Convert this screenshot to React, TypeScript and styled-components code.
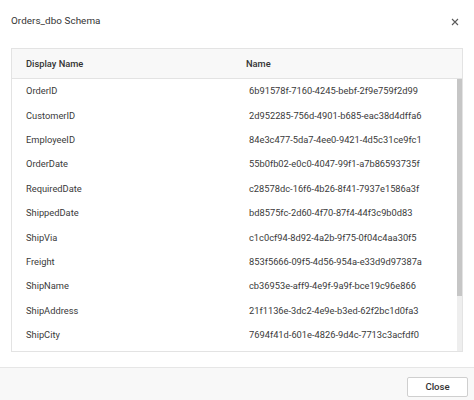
import * as React from "react";
import styled, { createGlobalStyle } from "styled-components";

type Field = { displayName: string; name: string };

// only the rows that fit the grid's viewport; the scrollbar thumb hints at the rest
const fields: Field[] = [
  { displayName: "OrderID", name: "6b91578f-7160-4245-bebf-2f9e759f2d99" },
  { displayName: "CustomerID", name: "2d952285-756d-4901-b685-eac38d4dffa6" },
  { displayName: "EmployeeID", name: "84e3c477-5da7-4ee0-9421-4d5c31ce9fc1" },
  { displayName: "OrderDate", name: "55b0fb02-e0c0-4047-99f1-a7b86593735f" },
  { displayName: "RequiredDate", name: "c28578dc-16f6-4b26-8f41-7937e1586a3f" },
  { displayName: "ShippedDate", name: "bd8575fc-2d60-4f70-87f4-44f3c9b0d83" },
  { displayName: "ShipVia", name: "c1c0cf94-8d92-4a2b-9f75-0f04c4aa30f5" },
  { displayName: "Freight", name: "853f5666-09f5-4d56-954a-e33d9d97387a" },
  { displayName: "ShipName", name: "cb36953e-aff9-4e9f-9a9f-bce19c96e866" },
  { displayName: "ShipAddress", name: "21f1136e-3dc2-4e9e-b3ed-62f2bc1d0fa3" },
  { displayName: "ShipCity", name: "7694f41d-601e-4826-9d4c-7713c3acfdf0" },
];

/* =========================
 * Styles
 * ========================= */

const GlobalStyle = createGlobalStyle`
  html, body {
    margin: 0;
    padding: 0;
    background: #ffffff;
  }
  body {
    font-family: Roboto, "Liberation Sans", Arial, sans-serif;
  }
`;

const Dialog = styled.div`
  width: 474px;
  height: 400px;
  display: flex;
  flex-direction: column;
  box-sizing: border-box;
  background: #ffffff;
  overflow: hidden;
`;

const DialogHeader = styled.div`
  flex: 0 0 40px;
  height: 40px;
  display: flex;
  align-items: center;
  justify-content: space-between;
  padding: 0 12px 0 11px;
  box-sizing: border-box;
`;

const DialogTitle = styled.div`
  font-size: 9.9px;
  color: #333333;
  letter-spacing: 0.05px;
  margin-top: 1px;
`;

const CloseIcon = styled.button`
  width: 14px;
  height: 14px;
  padding: 0;
  border: none;
  background: transparent;
  display: flex;
  align-items: center;
  justify-content: center;
  cursor: pointer;
  margin-top: 4px;
`;

const DialogContent = styled.div`
  padding: 7.5px 11px 0 11px;
  flex: 0 0 auto;
`;

const Grid = styled.div`
  border: 1px solid #e3e3e3;
  box-sizing: border-box;
  width: 452px;
`;

const HeadRow = styled.div`
  display: grid;
  grid-template-columns: 222px 1fr;
  height: 30px;
  align-items: center;
  background: #f8f8f8;
  border-bottom: 1px solid #e3e3e3;
  box-sizing: border-box;
`;

const HeadCell = styled.div<{ $pad: number }>`
  padding-left: ${({ $pad }) => $pad}px;
  font-size: 9.3px;
  font-weight: 500;
  color: #333333;
`;

const Body = styled.div`
  height: 272px;
  display: flex;
`;

const RowList = styled.div`
  flex: 1;
  overflow: hidden;
`;

const ScrollTrack = styled.div`
  width: 5px;
  flex: 0 0 5px;
  background: #eeeeee;
`;

const ScrollThumb = styled.div<{ $size: number }>`
  height: ${({ $size }) => $size}px;
  background: #c6c6c6;
`;

const Row = styled.div`
  display: grid;
  grid-template-columns: 222px 1fr;
  height: 24.4px;
  align-items: center;
`;

const Cell = styled.div<{ $pad: number }>`
  padding-left: ${({ $pad }) => $pad}px;
  font-size: 9.3px;
  color: #3a3a3a;
  white-space: nowrap;
`;

const Footer = styled.div`
  margin-top: 15px;
  height: 40px;
  flex: 0 0 40px;
  display: flex;
  align-items: center;
  justify-content: flex-end;
  padding: 0 6px 0 0;
  background: #f8f8f8;
  border-top: 1px solid #e6e6e6;
  box-sizing: border-box;
`;

const FooterButton = styled.button`
  width: 61px;
  height: 20px;
  margin-top: -1px;
  border: 1px solid #cfcfcf;
  border-radius: 2px;
  background: #ffffff;
  color: #333333;
  font-family: Roboto, "Liberation Sans", Arial, sans-serif;
  font-size: 9.6px;
  font-weight: 500;
  padding: 0;
  cursor: pointer;
`;

/* =========================
 * Component
 * ========================= */

export default function App() {
  return (
    <>
      <GlobalStyle />
      <Dialog>
        <DialogHeader>
          <DialogTitle>Orders_dbo Schema</DialogTitle>
          <CloseIcon aria-label="close">
            <svg width="8" height="8" viewBox="0 0 8 8">
              <path
                d="M1 1 L7 7 M7 1 L1 7"
                stroke="#5a5a5a"
                strokeWidth="1.1"
                fill="none"
              />
            </svg>
          </CloseIcon>
        </DialogHeader>

        <DialogContent>
          <Grid>
            <HeadRow>
              <HeadCell $pad={14}>Display Name</HeadCell>
              <HeadCell $pad={12}>Name</HeadCell>
            </HeadRow>
            <Body>
              <RowList>
                {fields.map((f) => (
                  <Row key={f.displayName}>
                    <Cell $pad={14}>{f.displayName}</Cell>
                    <Cell $pad={15}>{f.name}</Cell>
                  </Row>
                ))}
              </RowList>
              <ScrollTrack>
                <ScrollThumb $size={217} />
              </ScrollTrack>
            </Body>
          </Grid>
        </DialogContent>

        <Footer>
          <FooterButton>Close</FooterButton>
        </Footer>
      </Dialog>
    </>
  );
}
